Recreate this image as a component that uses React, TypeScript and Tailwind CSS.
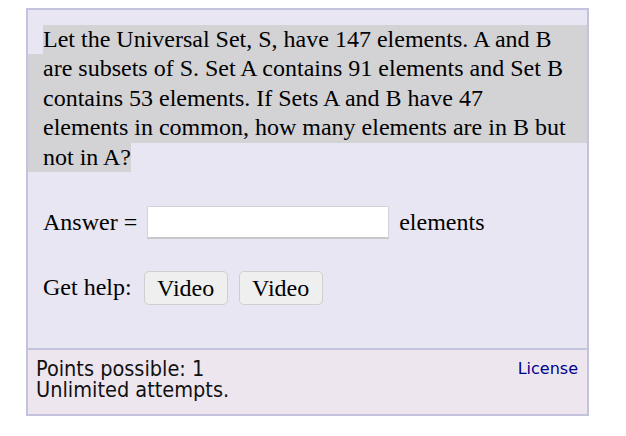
export default function App() {
  return (
    <div className="min-h-[436px] bg-white pl-[26px] pt-[8px]">
      <div className="w-[563px] border-2 border-[#c3c3e0] bg-[#e8e6f2]">
        <div className="pt-[15px] pb-[43px] font-['Liberation_Serif',serif] text-[24px] leading-[29.4px] text-black">
          <div className="flex">
            <div className="w-[15px]" />
            <div className="flex-1 bg-[#d3d3d6]">Let the Universal Set, S, have 147 elements. A and B</div>
          </div>
          <div className="bg-[#d3d3d6] pl-[15px]">are subsets of S. Set A contains 91 elements and Set B</div>
          <div className="bg-[#d3d3d6] pl-[15px]">contains 53 elements. If Sets A and B have 47</div>
          <div className="bg-[#d3d3d6] pl-[15px]">elements in common, how many elements are in B but</div>
          <div>
            <span className="inline-block bg-[#d3d3d6] pl-[15px]">not in A?</span>
          </div>

          <div className="mt-[34px] flex items-center pl-[15px]">
            <span>Answer =</span>
            <input
              type="text"
              className="ml-[10px] h-[33px] w-[242px] border border-[#d4d4d8] border-b-2 border-b-[#c8c8cc] bg-white"
            />
            <span className="ml-[10px]">elements</span>
          </div>

          <div className="mt-[32px] flex items-center pl-[15px]">
            <span>Get help:</span>
            <button className="ml-[12px] h-[34px] w-[84px] rounded-[5px] border border-[#cfcfcf] bg-[#efefef] leading-none">
              Video
            </button>
            <button className="ml-[11px] h-[34px] w-[84px] rounded-[5px] border border-[#cfcfcf] bg-[#efefef] leading-none">
              Video
            </button>
          </div>
        </div>

        <div className="flex h-[66px] items-start justify-between border-t-2 border-[#c3c3e0] bg-[#ede6ef] pl-[8px] pr-[9px] pt-[9px] font-['DejaVu_Sans_Condensed','DejaVu_Sans',sans-serif] text-[#111]">
          <div className="text-[21.5px] leading-[20.5px]">
            <div>Points possible: 1</div>
            <div>Unlimited attempts.</div>
          </div>
          <a href="#" className="font-['DejaVu_Sans',sans-serif] text-[16px] leading-[20px] text-[#00008b]">
            License
          </a>
        </div>
      </div>
    </div>
  );
}
